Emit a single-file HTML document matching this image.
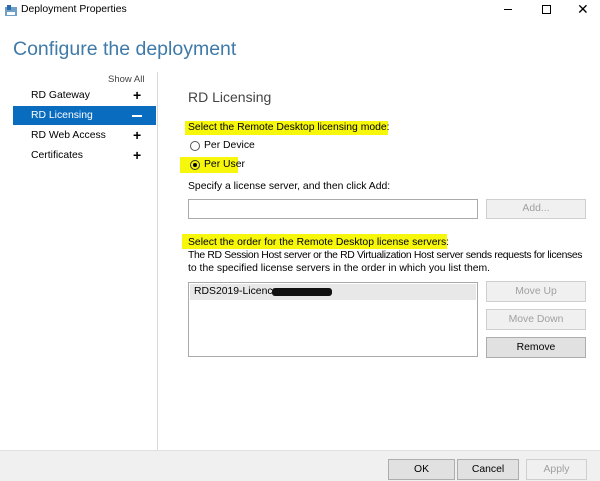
<!DOCTYPE html>
<html><head><style>
*{margin:0;padding:0;box-sizing:border-box}
body{width:600px;height:481px;background:#fff;font-family:"Liberation Sans",sans-serif;font-size:10.4px;color:#000;position:relative;overflow:hidden}
.a{position:absolute;white-space:nowrap}
.hl{background:#f7f70c}
.btn{position:absolute;border:1px solid #adadad;background:#e1e1e1;text-align:center;font-size:10.4px;line-height:18px}
.dis{color:#a0a0a0;background:#f0f0f0;border-color:#cfcfcf}
</style></head><body>
<svg class="a" style="left:4px;top:4px" width="14" height="13"><rect x="1" y="3" width="12" height="9" fill="#6fa0c8"/><rect x="3" y="1" width="4" height="5" fill="#2a6aa8"/><rect x="3" y="8" width="8" height="3" fill="#fff"/></svg>
<div class="a" style="left:21px;top:4px">Deployment Properties</div>
<div class="a" style="left:504px;top:9px;width:8px;height:1px;background:#000"></div>
<div class="a" style="left:542px;top:5px;width:9px;height:9px;border:1px solid #000"></div>
<div class="a" style="left:577px;top:1px;font-size:14px">✕</div>
<div class="a" style="left:13px;top:38px;font-size:19.5px;color:#3f7aa8">Configure the deployment</div>
<div class="a" style="left:108px;top:74px;font-size:9.5px;color:#444">Show All</div>
<div class="a" style="left:157px;top:72px;width:1px;height:378px;background:#d9d9d9"></div>
<div class="a" style="left:31px;top:90px">RD Gateway</div><div class="a" style="left:133px;top:87px;font-size:14px;font-weight:bold">+</div>
<div class="a" style="left:13px;top:106px;width:143px;height:19px;background:#0a6cbf"></div>
<div class="a" style="left:31px;top:110px;color:#fff">RD Licensing</div><div class="a" style="left:132px;top:115px;width:10px;height:2px;background:#fff"></div>
<div class="a" style="left:31px;top:130px">RD Web Access</div><div class="a" style="left:133px;top:127px;font-size:14px;font-weight:bold">+</div>
<div class="a" style="left:31px;top:150px">Certificates</div><div class="a" style="left:133px;top:147px;font-size:14px;font-weight:bold">+</div>
<div class="a" style="left:188px;top:89px;font-size:14px;color:#444">RD Licensing</div>
<div class="a hl" style="left:185px;top:121px;width:203px;height:14px"></div>
<div class="a" style="left:188px;top:122px">Select the Remote Desktop licensing mode:</div>
<div class="a" style="left:190px;top:141px;width:10px;height:10px;border:1px solid #555;border-radius:50%"></div>
<div class="a" style="left:204px;top:140px">Per Device</div>
<div class="a hl" style="left:180px;top:157px;width:58px;height:16px"></div>
<div class="a" style="left:190px;top:160px;width:10px;height:10px;border:1px solid #333;border-radius:50%"></div>
<div class="a" style="left:193px;top:163px;width:4px;height:4px;background:#000;border-radius:50%"></div>
<div class="a" style="left:204px;top:159px">Per User</div>
<div class="a" style="left:188px;top:181px">Specify a license server, and then click Add:</div>
<div class="a" style="left:188px;top:199px;width:290px;height:20px;border:1px solid #aaa"></div>
<div class="btn dis" style="left:486px;top:199px;width:100px;height:20px">Add...</div>
<div class="a hl" style="left:182px;top:234px;width:265px;height:15px"></div>
<div class="a" style="left:188px;top:237px">Select the order for the Remote Desktop license servers:</div>
<div class="a" style="left:188px;top:250px;letter-spacing:-0.35px">The RD Session Host server or the RD Virtualization Host server sends requests for licenses</div>
<div class="a" style="left:188px;top:263px">to the specified license servers in the order in which you list them.</div>
<div class="a" style="left:188px;top:282px;width:290px;height:75px;border:1px solid #aaa"></div>
<div class="a" style="left:190px;top:284px;width:286px;height:16px;background:#e8e8e8"></div>
<div class="a" style="left:194px;top:286px">RDS2019-Licence</div>
<div class="a" style="left:272px;top:288px;width:60px;height:8px;background:#111;border-radius:3px"></div>
<div class="btn dis" style="left:486px;top:281px;width:100px;height:21px;line-height:19px">Move Up</div>
<div class="btn dis" style="left:486px;top:309px;width:100px;height:21px;line-height:19px">Move Down</div>
<div class="btn" style="left:486px;top:337px;width:100px;height:21px;line-height:19px">Remove</div>
<div class="a" style="left:0;top:450px;width:600px;height:31px;background:#f0f0f0;border-top:1px solid #e0e0e0"></div>
<div class="btn" style="left:388px;top:459px;width:67px;height:21px;line-height:19px">OK</div>
<div class="btn" style="left:457px;top:459px;width:62px;height:21px;line-height:19px">Cancel</div>
<div class="btn dis" style="left:526px;top:459px;width:61px;height:21px;line-height:19px">Apply</div>
</body></html>
